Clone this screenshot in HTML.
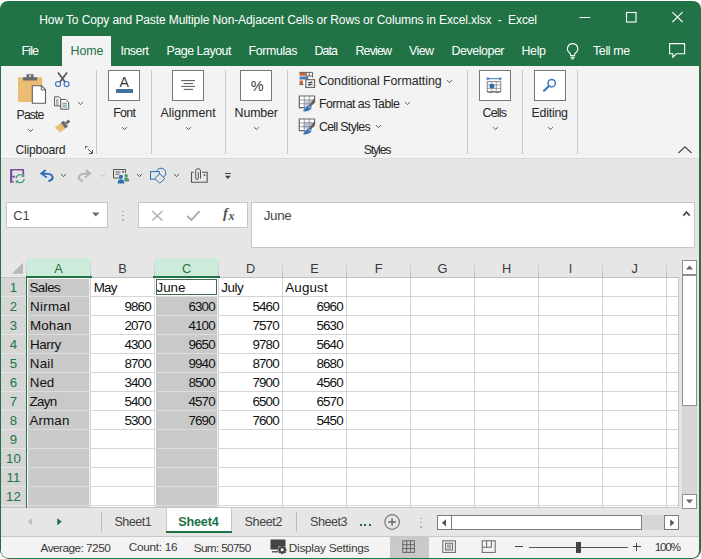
<!DOCTYPE html>
<html>
<head>
<meta charset="utf-8">
<title>Excel</title>
<style>
*{box-sizing:border-box;margin:0;padding:0}
html,body{width:701px;height:559px;overflow:hidden;background:#fff}
body{font-family:"Liberation Sans",sans-serif;position:relative}
.b{position:absolute;display:block}
.t{position:absolute;white-space:pre;line-height:1}

</style>
</head>
<body>
<div class="b" id="win" style="left:0;top:1px;width:701px;height:558px;background:#217346;border-radius:8px 8px 9px 9px;overflow:hidden">
<div class="b" style="left:1px;top:65px;width:698px;height:92px;background:#f3f3f3"></div>
<div class="b" style="left:1px;top:157px;width:698px;height:379px;background:#e6e6e6;border-top:1px solid #dadada"></div>
<div class="b" style="left:1px;top:535px;width:698px;height:21.5px;background:#f3f3f3;border-top:1px solid #c8c8c8;border-radius:0 0 7px 7px"></div>
<div class="b" style="left:62px;top:35px;width:49px;height:31px;background:#f3f3f3"></div>
</div>
<div class="t pre" style="left:39.25px;top:13.85px;font-size:12px;color:#ffffff;letter-spacing:-0.105px;">How To Copy and Paste Multiple Non-Adjacent Cells or Rows or Columns in Excel.xlsx  -  Excel</div>
<svg class="b" style="left:570px;top:8px" width="120" height="20" viewBox="0 0 120 20"><path d="M9.7 9.5H20.3" stroke="#fff" stroke-width="1"/><rect x="56.5" y="4.5" width="9.5" height="9.5" fill="none" stroke="#fff" stroke-width="1.1"/><path d="M102.4 4.1 L112.6 14 M112.6 4.1 L102.4 14" stroke="#fff" stroke-width="1.1" fill="none"/></svg>
<div class="t " style="left:21.50px;top:44.85px;font-size:12.4px;color:#ffffff;letter-spacing:-0.825px;">File</div>
<div class="t " style="left:70.50px;top:44.85px;font-size:12.4px;color:#217346;letter-spacing:-0.028px;">Home</div>
<div class="t " style="left:120.50px;top:44.85px;font-size:12.4px;color:#ffffff;letter-spacing:-0.502px;">Insert</div>
<div class="t " style="left:166.50px;top:44.85px;font-size:12.4px;color:#ffffff;letter-spacing:-0.464px;">Page Layout</div>
<div class="t " style="left:248.50px;top:44.85px;font-size:12.4px;color:#ffffff;letter-spacing:-0.383px;">Formulas</div>
<div class="t " style="left:314.50px;top:44.85px;font-size:12.4px;color:#ffffff;letter-spacing:-0.900px;">Data</div>
<div class="t " style="left:355.50px;top:44.85px;font-size:12.4px;color:#ffffff;letter-spacing:-0.839px;">Review</div>
<div class="t " style="left:409.00px;top:44.85px;font-size:12.4px;color:#ffffff;letter-spacing:-0.562px;">View</div>
<div class="t " style="left:451.50px;top:44.85px;font-size:12.4px;color:#ffffff;letter-spacing:-0.440px;">Developer</div>
<div class="t " style="left:521.50px;top:44.85px;font-size:12.4px;color:#ffffff;letter-spacing:-0.336px;">Help</div>
<div class="t " style="left:593.00px;top:44.85px;font-size:12.4px;color:#ffffff;letter-spacing:-0.339px;">Tell me</div>
<svg class="b" style="left:565px;top:41px" width="16" height="20" viewBox="0 0 16 20"><path d="M7.6 2.6a5.1 5.1 0 0 0-3.2 9.1c.8.7 1.2 1.5 1.2 2.5v.4h4v-.4c0-1 .4-1.8 1.2-2.5a5.1 5.1 0 0 0-3.2-9.100z" fill="none" stroke="#fff" stroke-width="1.1"/><path d="M5.6 16.4h4M6.1 17.9h3" stroke="#fff" stroke-width="1"/></svg>
<svg class="b" style="left:667px;top:41px" width="20" height="18" viewBox="0 0 20 18"><path d="M2.6 2.6h15v10.2h-8.2l-3.6 3.4v-3.4h-3.2z" fill="none" stroke="#fff" stroke-width="1.1"/></svg>
<div class="b " style="left:96px;top:70px;width:1px;height:84px;background:#c8c8c8"></div>
<div class="b " style="left:151px;top:70px;width:1px;height:84px;background:#c8c8c8"></div>
<div class="b " style="left:225px;top:70px;width:1px;height:84px;background:#c8c8c8"></div>
<div class="b " style="left:287px;top:70px;width:1px;height:84px;background:#c8c8c8"></div>
<div class="b " style="left:467px;top:70px;width:1px;height:84px;background:#c8c8c8"></div>
<div class="b " style="left:522px;top:70px;width:1px;height:84px;background:#c8c8c8"></div>
<div class="b " style="left:577px;top:70px;width:1px;height:84px;background:#c8c8c8"></div>
<div class="b " style="left:108px;top:70px;width:32px;height:31px;background:#fff;border:1px solid #777"></div>
<div class="b " style="left:172px;top:70px;width:32px;height:31px;background:#fff;border:1px solid #777"></div>
<div class="b " style="left:240px;top:70px;width:32px;height:31px;background:#fff;border:1px solid #777"></div>
<div class="b " style="left:479px;top:70px;width:32px;height:31px;background:#fff;border:1px solid #777"></div>
<div class="b " style="left:534px;top:70px;width:32px;height:31px;background:#fff;border:1px solid #777"></div>
<div class="t " style="left:16.60px;top:108.65px;font-size:12.4px;color:#262626;letter-spacing:-0.952px;">Paste</div>
<svg class="b" style="left:26.7px;top:128px" width="7" height="5" viewBox="0 0 7 5"><path d="M1.1 1.2 L3.5 3.6 L5.9 1.2" fill="none" stroke="#505050" stroke-width="1"/></svg>
<div class="t " style="left:113.20px;top:107.25px;font-size:12.4px;color:#262626;letter-spacing:-0.671px;">Font</div>
<svg class="b" style="left:120.6px;top:125.8px" width="7" height="5" viewBox="0 0 7 5"><path d="M1.1 1.2 L3.5 3.6 L5.9 1.2" fill="none" stroke="#505050" stroke-width="1"/></svg>
<div class="t " style="left:160.50px;top:107.25px;font-size:12.4px;color:#262626;letter-spacing:0.007px;">Alignment</div>
<svg class="b" style="left:184.6px;top:125.8px" width="7" height="5" viewBox="0 0 7 5"><path d="M1.1 1.2 L3.5 3.6 L5.9 1.2" fill="none" stroke="#505050" stroke-width="1"/></svg>
<div class="t " style="left:234.60px;top:107.25px;font-size:12.4px;color:#262626;letter-spacing:-0.141px;">Number</div>
<svg class="b" style="left:252.6px;top:125.8px" width="7" height="5" viewBox="0 0 7 5"><path d="M1.1 1.2 L3.5 3.6 L5.9 1.2" fill="none" stroke="#505050" stroke-width="1"/></svg>
<div class="t " style="left:482.60px;top:107.25px;font-size:12.4px;color:#262626;letter-spacing:-0.791px;">Cells</div>
<svg class="b" style="left:491.6px;top:125.8px" width="7" height="5" viewBox="0 0 7 5"><path d="M1.1 1.2 L3.5 3.6 L5.9 1.2" fill="none" stroke="#505050" stroke-width="1"/></svg>
<div class="t " style="left:531.60px;top:107.25px;font-size:12.4px;color:#262626;letter-spacing:-0.253px;">Editing</div>
<svg class="b" style="left:546.6px;top:125.8px" width="7" height="5" viewBox="0 0 7 5"><path d="M1.1 1.2 L3.5 3.6 L5.9 1.2" fill="none" stroke="#505050" stroke-width="1"/></svg>
<div class="t " style="left:15.60px;top:144.25px;font-size:12.2px;color:#262626;letter-spacing:-0.289px;">Clipboard</div>
<div class="t " style="left:363.80px;top:144.25px;font-size:12.2px;color:#262626;letter-spacing:-1.104px;">Styles</div>
<div class="t " style="left:318.40px;top:75.25px;font-size:12.4px;color:#262626;letter-spacing:-0.069px;">Conditional Formatting</div>
<svg class="b" style="left:445.8px;top:78.8px" width="7" height="5" viewBox="0 0 7 5"><path d="M1.1 1.2 L3.5 3.6 L5.9 1.2" fill="none" stroke="#505050" stroke-width="1"/></svg>
<div class="t " style="left:318.90px;top:98.25px;font-size:12.4px;color:#262626;letter-spacing:-0.541px;">Format as Table</div>
<svg class="b" style="left:404px;top:101.3px" width="7" height="5" viewBox="0 0 7 5"><path d="M1.1 1.2 L3.5 3.6 L5.9 1.2" fill="none" stroke="#505050" stroke-width="1"/></svg>
<div class="t " style="left:318.90px;top:121.25px;font-size:12.4px;color:#262626;letter-spacing:-0.678px;">Cell Styles</div>
<svg class="b" style="left:374.8px;top:124.2px" width="7" height="5" viewBox="0 0 7 5"><path d="M1.1 1.2 L3.5 3.6 L5.9 1.2" fill="none" stroke="#505050" stroke-width="1"/></svg>
<svg class="b" style="left:16px;top:72px" width="32" height="34" viewBox="0 0 32 34"><rect x="2" y="5.2" width="24.2" height="24.8" rx="1.2" fill="#eabd72"/><path d="M7 5.2h14.2v3.4H7z M10.5 2.2h7v3.2h-7z" fill="#6a6a6a"/><rect x="13" y="3.3" width="2" height="1.4" fill="#f3f3f3"/><path d="M16.3 13.7h9.2l4 4v13.6h-13.2z" fill="#fff" stroke="#5c5c5c" stroke-width="1.1" stroke-linejoin="round"/><path d="M25.3 13.9v4h4" fill="none" stroke="#5c5c5c" stroke-width="1"/></svg>
<svg class="b" style="left:54px;top:71px" width="17" height="18" viewBox="0 0 17 18"><path d="M4 1.6 L11.2 11.2 M13 1.6 L5.8 11.2" stroke="#555" stroke-width="1.7" fill="none"/><circle cx="4" cy="13" r="2.5" fill="none" stroke="#3d76ba" stroke-width="1.2"/><circle cx="12.6" cy="13" r="2.5" fill="none" stroke="#3d76ba" stroke-width="1.2"/></svg>
<svg class="b" style="left:53px;top:95px" width="18" height="16" viewBox="0 0 18 16"><path d="M1.6 1.9h4.4l2 2v7h-6.4z" fill="#fff" stroke="#555" stroke-width="1"/><path d="M3 5h2.6M3 7h2.6M3 9h2.6" stroke="#555" stroke-width=".9"/><path d="M7.7 4.5h5l3 3v6.7h-8z" fill="#fff" stroke="#555" stroke-width="1"/><path d="M9.3 8.2h4.7M9.3 10.1h4.700M9.3 12h4.700" stroke="#3a7c9a" stroke-width=".9"/></svg>
<svg class="b" style="left:77px;top:101px" width="7" height="5" viewBox="0 0 7 5"><path d="M1.1 1.2 L3.5 3.6 L5.9 1.2" fill="none" stroke="#505050" stroke-width="1"/></svg>
<svg class="b" style="left:54px;top:118px" width="18" height="16" viewBox="0 0 18 16"><path d="M1 9.200 L7 5 L11.200 11 L5.800 14.500 z" fill="#eabd72"/><path d="M6.800 4.600 L9.800 2.700 L14 8.600 L11 10.600 z" fill="#6a6a6a"/><path d="M11.300 4.300 L14.300 1.500 L16.300 3.800 L13 6.600 z" fill="#6a6a6a"/></svg>
<svg class="b" style="left:85px;top:146px" width="9" height="9" viewBox="0 0 9 9"><path d="M.5 2.500V.5H2.500 M3 3 L7.500 7.500 M7.500 4V7.500H4" fill="none" stroke="#555" stroke-width="1"/></svg>
<div class="t " style="left:119.60px;top:74.75px;font-size:14.2px;color:#3a3a3a;">A</div>
<div class="b " style="left:116px;top:88.6px;width:16.5px;height:4px;background:#41719c"></div>
<svg class="b" style="left:178px;top:76px" width="22" height="18" viewBox="0 0 22 18"><path d="M3.200 4.600H17 M5.700 7.600H15 M3.200 10.400H17 M5.700 13.400H15" stroke="#555" stroke-width="1" fill="none"/></svg>
<div class="t " style="left:250.80px;top:79.00px;font-size:14.5px;color:#3a3a3a;">%</div>
<svg class="b" style="left:298px;top:71px" width="18" height="18" viewBox="0 0 18 18"><rect x="1.500" y="1.400" width="13" height="12.200" fill="#fff"/><rect x="1.500" y="1.400" width="6.400" height="3.300" fill="#cf6238"/><rect x="1.500" y="5.500" width="8.800" height="3" fill="#4a7ab5"/><rect x="1.500" y="9.500" width="3.500" height="4" fill="#cf6238"/><path d="M1.500 1.400H14.500V6.500 M8.300 1.400v3.600 M11.300 1.400v3.600 M8 5h6.500 M1.500 13.600H5.500" stroke="#666" stroke-width="1" fill="none"/><rect x="7.800" y="8.700" width="8.700" height="7.700" fill="#fff" stroke="#666" stroke-width="1.200"/><path d="M9.800 11.600h4.800M9.800 13.700h4.800M13.500 10.300l-2.600 4.700" stroke="#333" stroke-width=".900" fill="none"/></svg>
<svg class="b" style="left:298px;top:94.6px" width="19" height="18" viewBox="0 0 19 18"><rect x="1.300" y="1" width="15.300" height="11.600" fill="#fff"/><rect x="6.300" y="4.900" width="10.300" height="3.800" fill="#c6d3e4"/><rect x="6.300" y="8.700" width="5" height="3.900" fill="#c6d3e4"/><path d="M1.300 4.900h15.300M1.300 8.700h15.300M6.300 1v11.600M11.300 1v11.600" stroke="#8a8a8a" stroke-width=".800" fill="none"/><path d="M16.600 3.500V1H1.300V12.600H7" stroke="#666" stroke-width="1.200" fill="none"/><path d="M17 2.200 L17.200 7 L13 11.600 L11.200 10 z" fill="#606060"/><path d="M5 16.300c1-2.200 2.400-4.200 4.600-5.600 2-1.200 4.600.6 3.800 2.600-.9 2.300-4.600 3.400-8.400 3z" fill="#3a74b8"/><path d="M10.500 12.300c.8-.5 1.700-.2 1.800.500" stroke="#e8eef6" stroke-width=".900" fill="none"/></svg>
<svg class="b" style="left:298px;top:117.6px" width="19" height="18" viewBox="0 0 19 18"><rect x="1.300" y="1" width="15.300" height="11.600" fill="#fff"/><rect x="5.300" y="3.900" width="9" height="6.800" fill="#bccbe0"/><path d="M1.300 4.900h15.300M1.300 8.700h15.300M6.300 1v11.600M11.300 1v11.600" stroke="#8a8a8a" stroke-width=".800" fill="none"/><path d="M16.600 3.500V1H1.300V12.600H7" stroke="#666" stroke-width="1.200" fill="none"/><path d="M17 2.200 L17.200 7 L13 11.600 L11.200 10 z" fill="#606060"/><path d="M5 16.300c1-2.200 2.400-4.200 4.600-5.600 2-1.200 4.600.6 3.800 2.600-.9 2.300-4.600 3.400-8.400 3z" fill="#3a74b8"/><path d="M10.500 12.300c.8-.5 1.700-.2 1.800.500" stroke="#e8eef6" stroke-width=".900" fill="none"/></svg>
<svg class="b" style="left:485px;top:76px" width="18" height="18" viewBox="0 0 18 18"><path d="M2.200 1.200v3M15.800 1.200v3M2.200 2.700h13.600" stroke="#3d76ba" stroke-width="1" fill="none"/><path d="M4.300 1.500l-1.600 1.200 1.600 1.200M13.700 1.500l1.600 1.200-1.600 1.200" stroke="#3d76ba" stroke-width=".8" fill="none"/><rect x="2.200" y="5.700" width="13.600" height="10" fill="#fff" stroke="#777" stroke-width=".9"/><path d="M2.200 9h13.600M2.200 12.400h13.600M6.700 5.700v10M11.300 5.700v10" stroke="#8a8a8a" stroke-width=".8" fill="none"/><rect x="4.600" y="8" width="4.600" height="4.200" fill="#2e6db4"/><path d="M2.200 15.700q3.400 2 6.800 0 3.400 2 6.800 0" stroke="#555" stroke-width=".9" fill="none"/></svg>
<svg class="b" style="left:541px;top:77px" width="18" height="16" viewBox="0 0 18 16"><circle cx="10.700" cy="6.200" r="3.700" fill="none" stroke="#3d76ba" stroke-width="1.500"/><path d="M8 9 L3 13.700" stroke="#3d76ba" stroke-width="2.200" stroke-linecap="round"/></svg>
<svg class="b" style="left:676.5px;top:145px" width="16" height="10" viewBox="0 0 16 10"><path d="M1.500 8 L8 1.800 L14.500 8" fill="none" stroke="#444" stroke-width="1.100"/></svg>
<svg class="b" style="left:9px;top:168px" width="18" height="16" viewBox="0 0 18 16"><path d="M1 .900H15.100V6.800H13.300V2.600H3.300V14.700H1z" fill="#7e4fa0"/><path d="M3.300 7.700H6V9.400H3.300z M3.300 13.200H4.800V14.700H3.300z" fill="#7e4fa0"/><path d="M7 10.300a4.100 4.100 0 0 1 7.300-2 M15.200 11.100a4.100 4.100 0 0 1-7.300 2" fill="none" stroke="#4fa07a" stroke-width="1.300"/><path d="M15.400 5.600v3.300h-3.300z M6.800 15.800v-3.300h3.300z" fill="#4fa07a"/></svg>
<svg class="b" style="left:38.5px;top:168px" width="16" height="16" viewBox="0 0 16 16"><g><path d="M.700 5.600 L6 1.200 L7.300 2.700 L4.700 5 C9 4.300 13.300 5.200 14.500 8.400 C15.300 11 13.300 13.400 9.600 13.900 L9.200 11.900 C11.700 11.500 13 10.300 12.400 8.800 C11.600 6.700 8.300 6.500 5 7.100 L8.300 8.600 L7.500 10.300 z" fill="#2f6fb8"/></g></svg>
<svg class="b" style="left:59.5px;top:173px" width="7" height="5" viewBox="0 0 7 5"><path d="M1.1 1.2 L3.5 3.6 L5.9 1.2" fill="none" stroke="#444" stroke-width="1"/></svg>
<svg class="b" style="left:77px;top:168px" width="16" height="16" viewBox="0 0 16 16"><g transform="translate(15.500,0) scale(-1,1)"><path d="M.700 5.600 L6 1.200 L7.300 2.700 L4.700 5 C9 4.300 13.300 5.200 14.500 8.400 C15.300 11 13.300 13.400 9.600 13.900 L9.200 11.900 C11.700 11.500 13 10.300 12.400 8.800 C11.600 6.700 8.300 6.500 5 7.100 L8.300 8.600 L7.500 10.300 z" fill="#b5b5b5"/></g></svg>
<svg class="b" style="left:98.8px;top:173px" width="7" height="5" viewBox="0 0 7 5"><path d="M1.1 1.2 L3.5 3.6 L5.9 1.2" fill="none" stroke="#bdbdbd" stroke-width="1"/></svg>
<svg class="b" style="left:112px;top:168px" width="19" height="17" viewBox="0 0 19 17"><path d="M9 10H1.500V1.500H13.500V5" fill="none" stroke="#555" stroke-width="1"/><path d="M3.500 4H8.500M3.500 6.200H7.500" stroke="#555" stroke-width=".9"/><rect x="10.200" y="3" width="1.800" height="1.600" fill="#555"/><circle cx="9" cy="8.800" r="2" fill="#2f6fb8"/><path d="M5.600 15.600c0-3 1.400-4.400 3.400-4.400s3.400 1.400 3.400 4.400z" fill="#2f6fb8"/><circle cx="14.200" cy="7.800" r="1.700" fill="#4a9a6c"/><path d="M12 10.500c.6-.6 1.300-.9 2.200-.9 1.800 0 3 1.200 3 3.800h-4.600c0-1.200-.2-2.100-.6-2.900z" fill="#4a9a6c"/></svg>
<svg class="b" style="left:135.7px;top:173px" width="7" height="5" viewBox="0 0 7 5"><path d="M1.1 1.2 L3.5 3.6 L5.9 1.2" fill="none" stroke="#444" stroke-width="1"/></svg>
<svg class="b" style="left:149px;top:167px" width="19" height="17" viewBox="0 0 19 17"><circle cx="12" cy="6" r="4.800" fill="#e6e6e6" stroke="#2f6fb8" stroke-width="1"/><rect x="1.500" y="4.600" width="8.800" height="7.600" fill="#e6e6e6" stroke="#2f6fb8" stroke-width="1"/><path d="M10.800 6.800 L15.900 11.500 L10.800 16.200 L5.700 11.500 z" fill="#e6e6e6" stroke="#2f6fb8" stroke-width="1"/></svg>
<svg class="b" style="left:172.6px;top:173px" width="7" height="5" viewBox="0 0 7 5"><path d="M1.1 1.2 L3.5 3.6 L5.9 1.2" fill="none" stroke="#444" stroke-width="1"/></svg>
<svg class="b" style="left:190px;top:167px" width="19" height="17" viewBox="0 0 19 17"><path d="M3.800 5.200H1.500V15.200H17.200V5.200H12" fill="none" stroke="#555" stroke-width="1.100"/><path d="M8.300 5v6.200a1.300 1.300 0 0 1-2.600 0V4a2.400 2.400 0 0 1 4.800 0v7.600" fill="none" stroke="#555" stroke-width="1"/><rect x="13.700" y="7.300" width="1.600" height="1.600" fill="#555"/></svg>
<svg class="b" style="left:224px;top:171.5px" width="8" height="8" viewBox="0 0 8 8"><path d="M1 1.500H6.800" stroke="#444" stroke-width="1.100"/><path d="M1 3.800H6.800L3.900 7z" fill="#444"/></svg>
<div class="b " style="left:6px;top:202px;width:102px;height:26px;background:#fff;border:1px solid #c6c6c6"></div>
<div class="t " style="left:13.30px;top:210.15px;font-size:12.8px;color:#444;">C1</div>
<svg class="b" style="left:91px;top:211px" width="10" height="7" viewBox="0 0 10 7"><path d="M1 1.500H8.600L4.800 5.400z" fill="#6a6a6a"/></svg>
<div class="b " style="left:122px;top:210.5px;width:1.5px;height:1.5px;background:#b0b0b0"></div>
<div class="b " style="left:122px;top:214.8px;width:1.5px;height:1.5px;background:#b0b0b0"></div>
<div class="b " style="left:122px;top:219px;width:1.5px;height:1.5px;background:#b0b0b0"></div>
<div class="b " style="left:138px;top:202px;width:110px;height:26px;background:#fff;border:1px solid #c6c6c6"></div>
<svg class="b" style="left:150px;top:209px" width="14" height="13" viewBox="0 0 14 13"><path d="M2.200 2 L12.400 11.500 M12.400 2 L2.200 11.500" stroke="#b2b2b2" stroke-width="1.600" fill="none"/></svg>
<svg class="b" style="left:185px;top:209px" width="17" height="13" viewBox="0 0 17 13"><path d="M2.200 7 L6.300 11 L14.600 2.200" stroke="#b2b2b2" stroke-width="2" fill="none"/></svg>
<div class="t" style="left:223px;top:206px;font-family:'Liberation Serif',serif;font-style:italic;font-size:15px;color:#555;font-weight:bold;letter-spacing:0.4px">f<span style="font-size:12px;position:relative;top:1.5px">x</span></div>
<div class="b " style="left:251px;top:202px;width:443.5px;height:45.5px;background:#fff;border:1px solid #c6c6c6"></div>
<div class="t " style="left:263.80px;top:209.05px;font-size:13.4px;color:#444;letter-spacing:-0.384px;">June</div>
<svg class="b" style="left:681px;top:209px" width="12" height="9" viewBox="0 0 12 9"><path d="M2.300 6.600 L5.500 3.200 L8.700 6.600" fill="none" stroke="#555" stroke-width="1.900"/></svg>
<div class="b " style="left:1px;top:258px;width:678px;height:250px;background:#fff"></div>
<div class="b " style="left:1px;top:258px;width:678px;height:19px;background:#e6e6e6"></div>
<div class="b " style="left:27px;top:258px;width:64px;height:19px;background:#cdebdb"></div>
<div class="b " style="left:155px;top:258px;width:64px;height:19px;background:#cdebdb"></div>
<div class="b " style="left:1px;top:277px;width:678px;height:1px;background:#c2c2c2"></div>
<div class="b " style="left:90px;top:261px;width:1px;height:16px;background:linear-gradient(#e0e0e0,#bdbdbd)"></div>
<div class="b " style="left:154px;top:261px;width:1px;height:16px;background:linear-gradient(#e0e0e0,#bdbdbd)"></div>
<div class="b " style="left:218px;top:261px;width:1px;height:16px;background:linear-gradient(#e0e0e0,#bdbdbd)"></div>
<div class="b " style="left:282px;top:261px;width:1px;height:16px;background:linear-gradient(#e0e0e0,#bdbdbd)"></div>
<div class="b " style="left:346px;top:261px;width:1px;height:16px;background:linear-gradient(#e0e0e0,#bdbdbd)"></div>
<div class="b " style="left:410px;top:261px;width:1px;height:16px;background:linear-gradient(#e0e0e0,#bdbdbd)"></div>
<div class="b " style="left:474px;top:261px;width:1px;height:16px;background:linear-gradient(#e0e0e0,#bdbdbd)"></div>
<div class="b " style="left:538px;top:261px;width:1px;height:16px;background:linear-gradient(#e0e0e0,#bdbdbd)"></div>
<div class="b " style="left:602px;top:261px;width:1px;height:16px;background:linear-gradient(#e0e0e0,#bdbdbd)"></div>
<div class="b " style="left:666px;top:261px;width:1px;height:16px;background:linear-gradient(#e0e0e0,#bdbdbd)"></div>
<div class="b " style="left:26px;top:261px;width:1px;height:16px;background:linear-gradient(#e0e0e0,#bdbdbd)"></div>
<svg class="b" style="left:11px;top:262px" width="13" height="12" viewBox="0 0 13 12"><path d="M12 .8V11.800H.8z" fill="#b8b8b8"/></svg>
<div class="b " style="left:1px;top:278px;width:25px;height:230px;background:#d6d6d6"></div>
<div class="b " style="left:28px;top:279px;width:61px;height:229px;background:#c9c9c9"></div>
<div class="b " style="left:156px;top:297px;width:61px;height:211px;background:#c9c9c9"></div>
<div class="b " style="left:89px;top:278px;width:1px;height:230px;background:#ececec"></div>
<div class="b " style="left:217px;top:278px;width:1px;height:230px;background:#ececec"></div>
<div class="b " style="left:90px;top:278px;width:1px;height:230px;background:#d6d6d6"></div>
<div class="b " style="left:154px;top:278px;width:1px;height:230px;background:#d6d6d6"></div>
<div class="b " style="left:218px;top:278px;width:1px;height:230px;background:#d6d6d6"></div>
<div class="b " style="left:282px;top:278px;width:1px;height:230px;background:#d6d6d6"></div>
<div class="b " style="left:346px;top:278px;width:1px;height:230px;background:#d6d6d6"></div>
<div class="b " style="left:410px;top:278px;width:1px;height:230px;background:#d6d6d6"></div>
<div class="b " style="left:474px;top:278px;width:1px;height:230px;background:#d6d6d6"></div>
<div class="b " style="left:538px;top:278px;width:1px;height:230px;background:#d6d6d6"></div>
<div class="b " style="left:602px;top:278px;width:1px;height:230px;background:#d6d6d6"></div>
<div class="b " style="left:666px;top:278px;width:1px;height:230px;background:#d6d6d6"></div>
<div class="b " style="left:27px;top:296px;width:651px;height:1px;background:#d6d6d6"></div>
<div class="b " style="left:1px;top:296px;width:25px;height:1px;background:#e4e4e4"></div>
<div class="b " style="left:28px;top:296px;width:61px;height:1px;background:#dcdcdc"></div>
<div class="b " style="left:156px;top:296px;width:61px;height:1px;background:#dcdcdc"></div>
<div class="b " style="left:27px;top:315px;width:651px;height:1px;background:#d6d6d6"></div>
<div class="b " style="left:1px;top:315px;width:25px;height:1px;background:#e4e4e4"></div>
<div class="b " style="left:28px;top:315px;width:61px;height:1px;background:#dcdcdc"></div>
<div class="b " style="left:156px;top:315px;width:61px;height:1px;background:#dcdcdc"></div>
<div class="b " style="left:27px;top:334px;width:651px;height:1px;background:#d6d6d6"></div>
<div class="b " style="left:1px;top:334px;width:25px;height:1px;background:#e4e4e4"></div>
<div class="b " style="left:28px;top:334px;width:61px;height:1px;background:#dcdcdc"></div>
<div class="b " style="left:156px;top:334px;width:61px;height:1px;background:#dcdcdc"></div>
<div class="b " style="left:27px;top:353px;width:651px;height:1px;background:#d6d6d6"></div>
<div class="b " style="left:1px;top:353px;width:25px;height:1px;background:#e4e4e4"></div>
<div class="b " style="left:28px;top:353px;width:61px;height:1px;background:#dcdcdc"></div>
<div class="b " style="left:156px;top:353px;width:61px;height:1px;background:#dcdcdc"></div>
<div class="b " style="left:27px;top:372px;width:651px;height:1px;background:#d6d6d6"></div>
<div class="b " style="left:1px;top:372px;width:25px;height:1px;background:#e4e4e4"></div>
<div class="b " style="left:28px;top:372px;width:61px;height:1px;background:#dcdcdc"></div>
<div class="b " style="left:156px;top:372px;width:61px;height:1px;background:#dcdcdc"></div>
<div class="b " style="left:27px;top:391px;width:651px;height:1px;background:#d6d6d6"></div>
<div class="b " style="left:1px;top:391px;width:25px;height:1px;background:#e4e4e4"></div>
<div class="b " style="left:28px;top:391px;width:61px;height:1px;background:#dcdcdc"></div>
<div class="b " style="left:156px;top:391px;width:61px;height:1px;background:#dcdcdc"></div>
<div class="b " style="left:27px;top:410px;width:651px;height:1px;background:#d6d6d6"></div>
<div class="b " style="left:1px;top:410px;width:25px;height:1px;background:#e4e4e4"></div>
<div class="b " style="left:28px;top:410px;width:61px;height:1px;background:#dcdcdc"></div>
<div class="b " style="left:156px;top:410px;width:61px;height:1px;background:#dcdcdc"></div>
<div class="b " style="left:27px;top:429px;width:651px;height:1px;background:#d6d6d6"></div>
<div class="b " style="left:1px;top:429px;width:25px;height:1px;background:#e4e4e4"></div>
<div class="b " style="left:28px;top:429px;width:61px;height:1px;background:#dcdcdc"></div>
<div class="b " style="left:156px;top:429px;width:61px;height:1px;background:#dcdcdc"></div>
<div class="b " style="left:27px;top:448px;width:651px;height:1px;background:#d6d6d6"></div>
<div class="b " style="left:1px;top:448px;width:25px;height:1px;background:#e4e4e4"></div>
<div class="b " style="left:28px;top:448px;width:61px;height:1px;background:#dcdcdc"></div>
<div class="b " style="left:156px;top:448px;width:61px;height:1px;background:#dcdcdc"></div>
<div class="b " style="left:27px;top:467px;width:651px;height:1px;background:#d6d6d6"></div>
<div class="b " style="left:1px;top:467px;width:25px;height:1px;background:#e4e4e4"></div>
<div class="b " style="left:28px;top:467px;width:61px;height:1px;background:#dcdcdc"></div>
<div class="b " style="left:156px;top:467px;width:61px;height:1px;background:#dcdcdc"></div>
<div class="b " style="left:27px;top:486px;width:651px;height:1px;background:#d6d6d6"></div>
<div class="b " style="left:1px;top:486px;width:25px;height:1px;background:#e4e4e4"></div>
<div class="b " style="left:28px;top:486px;width:61px;height:1px;background:#dcdcdc"></div>
<div class="b " style="left:156px;top:486px;width:61px;height:1px;background:#dcdcdc"></div>
<div class="b " style="left:27px;top:505px;width:651px;height:1px;background:#d6d6d6"></div>
<div class="b " style="left:1px;top:505px;width:25px;height:1px;background:#e4e4e4"></div>
<div class="b " style="left:28px;top:505px;width:61px;height:1px;background:#dcdcdc"></div>
<div class="b " style="left:156px;top:505px;width:61px;height:1px;background:#dcdcdc"></div>
<div class="b " style="left:678px;top:277px;width:1px;height:231px;background:#c6c6c6"></div>
<div class="b " style="left:1px;top:507px;width:678px;height:1px;background:#c6c6c6"></div>
<div class="b " style="left:26px;top:276px;width:66px;height:2px;background:#217346"></div>
<div class="b " style="left:153px;top:276px;width:67px;height:2px;background:#217346"></div>
<div class="b " style="left:25.5px;top:277px;width:1.6px;height:231px;background:#217346"></div>
<div class="b " style="left:155px;top:278px;width:63px;height:18px;background:#fff"></div>
<div class="b " style="left:156px;top:279px;width:61px;height:16px;background:#fff;border:1px solid #3f6b55"></div>
<div class="t " style="left:54.33px;top:263.35px;font-size:12.8px;color:#217346;">A</div>
<div class="t " style="left:118.33px;top:263.35px;font-size:12.8px;color:#3a3a3a;">B</div>
<div class="t " style="left:181.98px;top:263.35px;font-size:12.8px;color:#217346;">C</div>
<div class="t " style="left:245.98px;top:263.35px;font-size:12.8px;color:#3a3a3a;">D</div>
<div class="t " style="left:310.33px;top:263.35px;font-size:12.8px;color:#3a3a3a;">E</div>
<div class="t " style="left:374.69px;top:263.35px;font-size:12.8px;color:#3a3a3a;">F</div>
<div class="t " style="left:437.62px;top:263.35px;font-size:12.8px;color:#3a3a3a;">G</div>
<div class="t " style="left:501.98px;top:263.35px;font-size:12.8px;color:#3a3a3a;">H</div>
<div class="t " style="left:568.82px;top:263.35px;font-size:12.8px;color:#3a3a3a;">I</div>
<div class="t " style="left:631.40px;top:263.35px;font-size:12.8px;color:#3a3a3a;">J</div>
<div class="t " style="left:9.73px;top:281.15px;font-size:13.2px;color:#217346;">1</div>
<div class="t " style="left:9.73px;top:300.15px;font-size:13.2px;color:#217346;">2</div>
<div class="t " style="left:9.73px;top:319.15px;font-size:13.2px;color:#217346;">3</div>
<div class="t " style="left:9.73px;top:338.15px;font-size:13.2px;color:#217346;">4</div>
<div class="t " style="left:9.73px;top:357.15px;font-size:13.2px;color:#217346;">5</div>
<div class="t " style="left:9.73px;top:376.15px;font-size:13.2px;color:#217346;">6</div>
<div class="t " style="left:9.73px;top:395.15px;font-size:13.2px;color:#217346;">7</div>
<div class="t " style="left:9.73px;top:414.15px;font-size:13.2px;color:#217346;">8</div>
<div class="t " style="left:9.73px;top:433.15px;font-size:13.2px;color:#217346;">9</div>
<div class="t " style="left:6.06px;top:452.15px;font-size:13.2px;color:#217346;">10</div>
<div class="t " style="left:6.55px;top:471.15px;font-size:13.2px;color:#217346;">11</div>
<div class="t " style="left:6.06px;top:490.15px;font-size:13.2px;color:#217346;">12</div>
<div class="t " style="left:29.50px;top:281.05px;font-size:13.4px;color:#111;letter-spacing:-0.566px;">Sales</div>
<div class="t " style="left:93.70px;top:281.05px;font-size:13.4px;color:#111;letter-spacing:-0.756px;">May</div>
<div class="t " style="left:156.50px;top:281.05px;font-size:13.4px;color:#111;letter-spacing:-0.017px;">June</div>
<div class="t " style="left:221.30px;top:281.05px;font-size:13.4px;color:#111;letter-spacing:-0.458px;">July</div>
<div class="t " style="left:285.30px;top:281.05px;font-size:13.4px;color:#111;letter-spacing:0.137px;">August</div>
<div class="t " style="left:30.00px;top:300.05px;font-size:13.4px;color:#111;letter-spacing:0.257px;">Nirmal</div>
<div class="t " style="left:124.40px;top:300.05px;font-size:13.4px;color:#111;letter-spacing:-0.838px;">9860</div>
<div class="t " style="left:188.40px;top:300.05px;font-size:13.4px;color:#111;letter-spacing:-0.838px;">6300</div>
<div class="t " style="left:252.40px;top:300.05px;font-size:13.4px;color:#111;letter-spacing:-0.838px;">5460</div>
<div class="t " style="left:316.40px;top:300.05px;font-size:13.4px;color:#111;letter-spacing:-0.838px;">6960</div>
<div class="t " style="left:30.00px;top:319.05px;font-size:13.4px;color:#111;letter-spacing:0.131px;">Mohan</div>
<div class="t " style="left:124.40px;top:319.05px;font-size:13.4px;color:#111;letter-spacing:-0.838px;">2070</div>
<div class="t " style="left:188.40px;top:319.05px;font-size:13.4px;color:#111;letter-spacing:-0.838px;">4100</div>
<div class="t " style="left:252.40px;top:319.05px;font-size:13.4px;color:#111;letter-spacing:-0.838px;">7570</div>
<div class="t " style="left:316.40px;top:319.05px;font-size:13.4px;color:#111;letter-spacing:-0.838px;">5630</div>
<div class="t " style="left:30.00px;top:338.05px;font-size:13.4px;color:#111;letter-spacing:-0.375px;">Harry</div>
<div class="t " style="left:124.40px;top:338.05px;font-size:13.4px;color:#111;letter-spacing:-0.838px;">4300</div>
<div class="t " style="left:188.40px;top:338.05px;font-size:13.4px;color:#111;letter-spacing:-0.838px;">9650</div>
<div class="t " style="left:252.40px;top:338.05px;font-size:13.4px;color:#111;letter-spacing:-0.838px;">9780</div>
<div class="t " style="left:316.40px;top:338.05px;font-size:13.4px;color:#111;letter-spacing:-0.838px;">5640</div>
<div class="t " style="left:29.80px;top:357.05px;font-size:13.4px;color:#111;letter-spacing:0.171px;">Nail</div>
<div class="t " style="left:124.40px;top:357.05px;font-size:13.4px;color:#111;letter-spacing:-0.838px;">8700</div>
<div class="t " style="left:188.40px;top:357.05px;font-size:13.4px;color:#111;letter-spacing:-0.838px;">9940</div>
<div class="t " style="left:252.40px;top:357.05px;font-size:13.4px;color:#111;letter-spacing:-0.838px;">8700</div>
<div class="t " style="left:316.40px;top:357.05px;font-size:13.4px;color:#111;letter-spacing:-0.838px;">8680</div>
<div class="t " style="left:29.80px;top:376.05px;font-size:13.4px;color:#111;letter-spacing:-0.088px;">Ned</div>
<div class="t " style="left:124.40px;top:376.05px;font-size:13.4px;color:#111;letter-spacing:-0.838px;">3400</div>
<div class="t " style="left:188.40px;top:376.05px;font-size:13.4px;color:#111;letter-spacing:-0.838px;">8500</div>
<div class="t " style="left:252.40px;top:376.05px;font-size:13.4px;color:#111;letter-spacing:-0.838px;">7900</div>
<div class="t " style="left:316.40px;top:376.05px;font-size:13.4px;color:#111;letter-spacing:-0.838px;">4560</div>
<div class="t " style="left:29.40px;top:395.05px;font-size:13.4px;color:#111;letter-spacing:-0.629px;">Zayn</div>
<div class="t " style="left:124.40px;top:395.05px;font-size:13.4px;color:#111;letter-spacing:-0.838px;">5400</div>
<div class="t " style="left:188.40px;top:395.05px;font-size:13.4px;color:#111;letter-spacing:-0.838px;">4570</div>
<div class="t " style="left:252.40px;top:395.05px;font-size:13.4px;color:#111;letter-spacing:-0.838px;">6500</div>
<div class="t " style="left:316.40px;top:395.05px;font-size:13.4px;color:#111;letter-spacing:-0.838px;">6570</div>
<div class="t " style="left:29.40px;top:414.05px;font-size:13.4px;color:#111;letter-spacing:0.134px;">Arman</div>
<div class="t " style="left:124.40px;top:414.05px;font-size:13.4px;color:#111;letter-spacing:-0.838px;">5300</div>
<div class="t " style="left:188.40px;top:414.05px;font-size:13.4px;color:#111;letter-spacing:-0.838px;">7690</div>
<div class="t " style="left:252.40px;top:414.05px;font-size:13.4px;color:#111;letter-spacing:-0.838px;">7600</div>
<div class="t " style="left:316.40px;top:414.05px;font-size:13.4px;color:#111;letter-spacing:-0.838px;">5450</div>
<div class="b " style="left:682px;top:260px;width:15px;height:248.5px;background:#d6d6d6"></div>
<div class="b " style="left:682px;top:260px;width:15px;height:14.5px;background:#fff;border:1px solid #8f8f8f"></div>
<svg class="b" style="left:685px;top:264px" width="10" height="7" viewBox="0 0 10 7"><path d="M.900 5.400L4.500 1.500 8.100 5.400z" fill="#666"/></svg>
<div class="b " style="left:682px;top:274.5px;width:15px;height:131px;background:#fff;border:1px solid #8f8f8f"></div>
<div class="b " style="left:682px;top:494px;width:15px;height:14.5px;background:#fff;border:1px solid #8f8f8f"></div>
<svg class="b" style="left:685px;top:498px" width="10" height="7" viewBox="0 0 10 7"><path d="M.900 1.600H8.100L4.500 5.600z" fill="#666"/></svg>
<svg class="b" style="left:26px;top:517px" width="8" height="10" viewBox="0 0 8 10"><path d="M6 1.300V8.300L1.600 4.800z" fill="#c0c0c0"/></svg>
<svg class="b" style="left:56px;top:517px" width="8" height="10" viewBox="0 0 8 10"><path d="M1.300 1.300V8.300L5.700 4.800z" fill="#1e6b41"/></svg>
<div class="b " style="left:101px;top:512px;width:1px;height:20px;background:#bdbdbd"></div>
<div class="t " style="left:114.50px;top:515.95px;font-size:12.6px;color:#444;letter-spacing:-0.536px;">Sheet1</div>
<div class="b " style="left:166px;top:508px;width:66px;height:24px;background:#fff;border-left:1px solid #c6c6c6;border-right:1px solid #c6c6c6"></div>
<div class="b " style="left:166px;top:531px;width:66px;height:2px;background:#217346"></div>
<div class="t " style="left:178.30px;top:515.95px;font-size:12.6px;color:#217346;letter-spacing:-0.173px;font-weight:bold;">Sheet4</div>
<div class="t " style="left:244.50px;top:515.95px;font-size:12.6px;color:#444;letter-spacing:-0.386px;">Sheet2</div>
<div class="b " style="left:296px;top:512px;width:1px;height:20px;background:#bdbdbd"></div>
<div class="t " style="left:310.00px;top:515.95px;font-size:12.6px;color:#444;letter-spacing:-0.486px;">Sheet3</div>
<div class="b " style="left:360px;top:523.7px;width:2px;height:2px;background:#1e6b41"></div>
<div class="b " style="left:364.3px;top:523.7px;width:2px;height:2px;background:#1e6b41"></div>
<div class="b " style="left:368.6px;top:523.7px;width:2px;height:2px;background:#1e6b41"></div>
<svg class="b" style="left:383px;top:513px" width="18" height="18" viewBox="0 0 18 18"><circle cx="9.100" cy="9" r="7.300" fill="none" stroke="#7a7a7a" stroke-width="1.200"/><path d="M5.300 9H12.900M9.100 5.200V12.800" stroke="#6a6a6a" stroke-width="1.400"/></svg>
<div class="b " style="left:420.2px;top:517.5px;width:1.5px;height:1.5px;background:#b0b0b0"></div>
<div class="b " style="left:420.2px;top:521.7px;width:1.5px;height:1.5px;background:#b0b0b0"></div>
<div class="b " style="left:420.2px;top:526px;width:1.5px;height:1.5px;background:#b0b0b0"></div>
<div class="b " style="left:437px;top:515px;width:242px;height:15px;background:#d6d6d6"></div>
<div class="b " style="left:437px;top:515px;width:15px;height:15px;background:#fff;border:1px solid #7c7c7c"></div>
<svg class="b" style="left:441px;top:518px" width="7" height="10" viewBox="0 0 7 10"><path d="M5 1.200V8.400L.900 4.800z" fill="#555"/></svg>
<div class="b " style="left:451px;top:515px;width:191px;height:15px;background:#fff;border:1px solid #7c7c7c"></div>
<div class="b " style="left:664px;top:515px;width:15px;height:15px;background:#fff;border:1px solid #7c7c7c"></div>
<svg class="b" style="left:669px;top:518px" width="7" height="10" viewBox="0 0 7 10"><path d="M1.200 1.200V8.400L5.300 4.800z" fill="#555"/></svg>
<div class="t " style="left:40.50px;top:543.15px;font-size:11.8px;color:#3a3a3a;letter-spacing:-0.525px;">Average: 7250</div>
<div class="t " style="left:128.75px;top:542.15px;font-size:11.8px;color:#3a3a3a;letter-spacing:-0.302px;">Count: 16</div>
<div class="t " style="left:193.75px;top:543.15px;font-size:11.8px;color:#3a3a3a;letter-spacing:-0.682px;">Sum: 50750</div>
<div class="t " style="left:288.75px;top:543.15px;font-size:11.8px;color:#3a3a3a;letter-spacing:-0.257px;">Display Settings</div>
<svg class="b" style="left:269px;top:538px" width="19" height="17" viewBox="0 0 19 17"><path d="M1.500 1.500H16.500V8H9.500V11.500H1.500z" fill="#444"/><path d="M3 13.800H9" stroke="#444" stroke-width="1.300"/><circle cx="13.200" cy="11.800" r="3" fill="#f3f3f3" stroke="#444" stroke-width="1.700"/><path d="M13.200 7.300v9M8.700 11.800h9M10 8.600l6.400 6.400M16.400 8.600l-6.400 6.400" stroke="#444" stroke-width="1.300"/><circle cx="13.200" cy="11.800" r="1.500" fill="#f3f3f3"/></svg>
<div class="b " style="left:389.5px;top:537px;width:39.5px;height:21px;background:#c9c9c9"></div>
<svg class="b" style="left:402px;top:540px" width="14" height="14" viewBox="0 0 14 14"><rect x=".800" y=".800" width="11.600" height="11.600" fill="none" stroke="#666" stroke-width="1"/><path d="M.800 4.700H12.400M.800 8.500H12.400M4.700 .800V12.400M8.500 .800V12.400" stroke="#666" stroke-width="1"/></svg>
<svg class="b" style="left:442px;top:540px" width="15" height="14" viewBox="0 0 15 14"><rect x=".800" y=".800" width="12.600" height="11.600" fill="none" stroke="#666" stroke-width="1"/><rect x="3.600" y="3.200" width="7" height="6.800" fill="none" stroke="#666" stroke-width="1"/><path d="M5 5H9.200M5 6.600H9.200M5 8.200H9.200" stroke="#666" stroke-width=".800"/></svg>
<svg class="b" style="left:481px;top:540px" width="16" height="14" viewBox="0 0 16 14"><rect x="1.200" y=".800" width="13" height="11.600" fill="none" stroke="#666" stroke-width="1"/><path d="M1.200 7.200H10.400M5.600 .800V7.200M10.400 .800V7.200" fill="none" stroke="#666" stroke-width="1"/></svg>
<div class="b " style="left:515px;top:546px;width:7.5px;height:1.2px;background:#444"></div>
<div class="b " style="left:528.5px;top:546.8px;width:99.5px;height:1px;background:#555"></div>
<div class="b " style="left:576.3px;top:541.8px;width:5px;height:11.2px;background:#444"></div>
<div class="b " style="left:633px;top:546.3px;width:7.6px;height:1.2px;background:#444"></div>
<div class="b " style="left:636.2px;top:543px;width:1.2px;height:7.8px;background:#444"></div>
<div class="t " style="left:654.75px;top:541.65px;font-size:11.8px;color:#3a3a3a;letter-spacing:-1.311px;">100%</div>
</body>
</html>
